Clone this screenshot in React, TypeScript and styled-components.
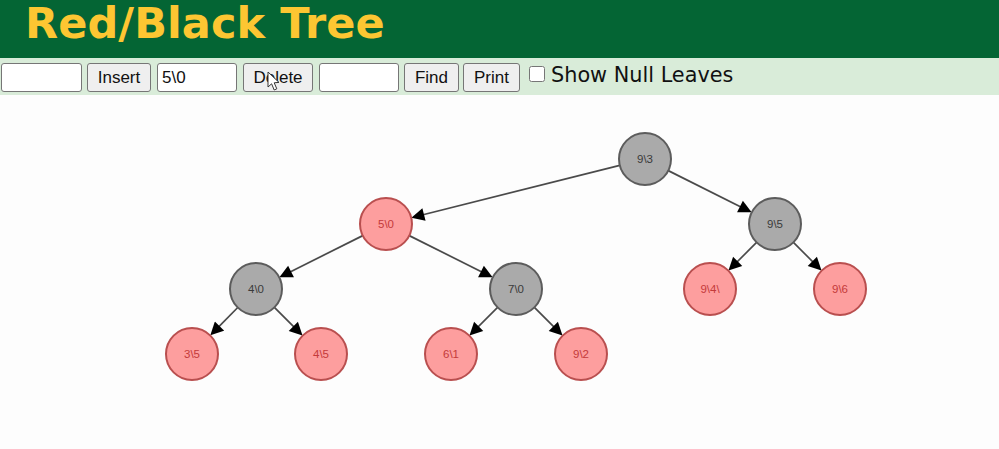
import styled, { createGlobalStyle } from "styled-components";

const GlobalStyle = createGlobalStyle`
  html, body {
    margin: 0;
    padding: 0;
    background: #fdfdfd;
  }
  body {
    width: 999px;
    height: 449px;
    overflow: hidden;
  }
`;

const Page = styled.div`
  position: relative;
  width: 999px;
  height: 449px;
  font-family: "Liberation Sans", Arial, sans-serif;
`;

const Header = styled.header`
  height: 58px;
  background: #046534;
  padding-left: 25px;
  box-sizing: border-box;
`;

const Title = styled.h1`
  margin: 0;
  font-family: "DejaVu Sans", Verdana, sans-serif;
  font-weight: 700;
  font-size: 43px;
  line-height: 46px;
  letter-spacing: 0.1px;
  color: #fdc632;
`;

const Toolbar = styled.div`
  height: 37px;
  box-sizing: border-box;
  background: #d9ecd9;
  padding: 5px 0 0 1px;
  display: flex;
  align-items: flex-start;
`;

const TextInput = styled.input<{ $w: number; $gap: number }>`
  width: ${(p) => p.$w}px;
  height: 29px;
  box-sizing: border-box;
  margin-right: ${(p) => p.$gap}px;
  padding: 1px 4px;
  border: 1px solid #767676;
  border-radius: 3px;
  background: #fff;
  font-family: "Liberation Sans", Arial, sans-serif;
  font-size: 17px;
  color: #111;
`;

const Button = styled.button<{ $w: number; $gap: number }>`
  width: ${(p) => p.$w}px;
  height: 29px;
  box-sizing: border-box;
  margin-right: ${(p) => p.$gap}px;
  padding: 0;
  border: 1px solid #767676;
  border-radius: 3px;
  background: #efefef;
  font-family: "Liberation Sans", Arial, sans-serif;
  font-size: 17px;
  color: #111;
`;

const LeavesLabel = styled.label`
  display: flex;
  align-items: center;
  height: 23px;
  font-family: "DejaVu Sans", Verdana, sans-serif;
  font-size: 20.8px;
  color: #111;
`;

const LeavesCheck = styled.input`
  width: 16px;
  height: 16px;
  margin: 0 6px 2px 5px;
`;

const Canvas = styled.svg`
  display: block;
  width: 999px;
  height: 354px;
`;

const Edge = styled.line`
  stroke: #4a4a4a;
  stroke-width: 1.7;
`;

const NodeCircle = styled.circle<{ $red: boolean }>`
  fill: ${(p) => (p.$red ? "#fd9e9e" : "#aaaaaa")};
  stroke: ${(p) => (p.$red ? "#b94f4f" : "#5c5c5c")};
  stroke-width: 2;
`;

const NodeLabel = styled.text<{ $red: boolean }>`
  font-family: "Liberation Sans", Arial, sans-serif;
  font-size: 11.5px;
  text-anchor: middle;
  fill: ${(p) => (p.$red ? "#c43a3a" : "#3a3a3a")};
`;

const Cursor = styled.svg`
  position: absolute;
  left: 267px;
  top: 71px;
  width: 14px;
  height: 21px;
`;

// canvas starts at y=95, all node positions are page coords minus that
const OFFSET = 95;
const R = 26;

type TreeNode = { id: string; label: string; x: number; y: number; red: boolean };

const nodes: TreeNode[] = [
  { id: "a", label: "9\\3", x: 645, y: 159, red: false },
  { id: "b", label: "5\\0", x: 386, y: 224, red: true },
  { id: "c", label: "9\\5", x: 775, y: 224, red: false },
  { id: "d", label: "4\\0", x: 256, y: 289, red: false },
  { id: "e", label: "7\\0", x: 516, y: 289, red: false },
  { id: "f", label: "9\\4\\", x: 710, y: 289, red: true },
  { id: "g", label: "9\\6", x: 840, y: 289, red: true },
  { id: "h", label: "3\\5", x: 192, y: 354, red: true },
  { id: "i", label: "4\\5", x: 321, y: 354, red: true },
  { id: "j", label: "6\\1", x: 451, y: 354, red: true },
  { id: "k", label: "9\\2", x: 581, y: 354, red: true },
];

const edges: [string, string][] = [
  ["a", "b"],
  ["a", "c"],
  ["b", "d"],
  ["b", "e"],
  ["c", "f"],
  ["c", "g"],
  ["d", "h"],
  ["d", "i"],
  ["e", "j"],
  ["e", "k"],
];

const find = (id: string) => nodes.find((n) => n.id === id) as TreeNode;

const edgeEnds = (from: TreeNode, to: TreeNode) => {
  const dx = to.x - from.x;
  const dy = to.y - from.y;
  const len = Math.sqrt(dx * dx + dy * dy);
  const ux = dx / len;
  const uy = dy / len;
  return {
    x1: from.x + ux * R,
    y1: from.y + uy * R - OFFSET,
    x2: to.x - ux * (R + 6),
    y2: to.y - uy * (R + 6) - OFFSET,
  };
};

const App = () => {
  return (
    <Page>
      <GlobalStyle />
      <Header>
        <Title>Red/Black Tree</Title>
      </Header>
      <Toolbar>
        <TextInput $w={81} $gap={5} />
        <Button $w={64} $gap={6}>Insert</Button>
        <TextInput $w={80} $gap={6} defaultValue="5\0" />
        <Button $w={70} $gap={6}>Delete</Button>
        <TextInput $w={80} $gap={5} />
        <Button $w={55} $gap={4}>Find</Button>
        <Button $w={57} $gap={4}>Print</Button>
        <LeavesLabel>
          <LeavesCheck type="checkbox" />
          Show Null Leaves
        </LeavesLabel>
      </Toolbar>
      <Canvas viewBox="0 0 999 354">
        <defs>
          <marker id="arrow" viewBox="0 0 10 10" refX="5.5" refY="5" markerWidth="14" markerHeight="13" markerUnits="userSpaceOnUse" orient="auto">
            <path d="M0 0 L10 5 L0 10 Z" fill="#000" />
          </marker>
        </defs>
        {edges.map(([a, b]) => (
          <Edge key={a + b} {...edgeEnds(find(a), find(b))} markerEnd="url(#arrow)" />
        ))}
        {nodes.map((n) => (
          <g key={n.id}>
            <NodeCircle $red={n.red} cx={n.x} cy={n.y - OFFSET} r={R} />
            <NodeLabel $red={n.red} x={n.x} y={n.y - OFFSET + 4}>
              {n.label}
            </NodeLabel>
          </g>
        ))}
      </Canvas>
      <Cursor viewBox="0 0 14 21">
        <path d="M1 1 L1 16 L4.6 12.8 L7.2 19 L9.8 17.8 L7.2 11.8 L12 11.4 Z" fill="#fff" stroke="#333" strokeWidth="1" />
      </Cursor>
    </Page>
  );
};

export default App;
